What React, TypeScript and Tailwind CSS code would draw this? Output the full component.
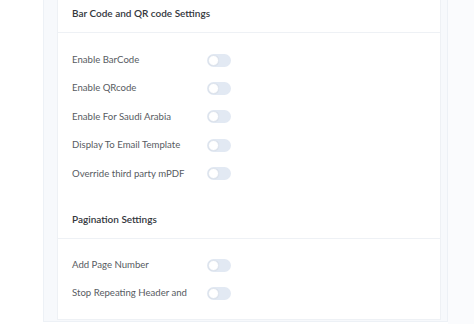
const Toggle = () => (
  <span className="relative inline-flex h-[13px] w-[24px] items-center rounded-full bg-[#e2e9f3]">
    <span className="absolute left-[1px] h-[11px] w-[11px] rounded-full border border-[#dfe5ee] bg-white shadow-[0_0_1px_rgba(0,0,0,0.08)]" />
  </span>
)

const Row = ({ label }: { label: string }) => (
  <div className="flex h-[28.4px] items-center">
    <span className="w-[135px] shrink-0 text-[9.6px] text-[#575b62]">{label}</span>
    <Toggle />
  </div>
)

const SectionHeader = ({ title }: { title: string }) => (
  <div className="flex h-[33px] items-center border-b border-[#eef1f5] px-[14px] pb-[5px]">
    <h3 className="text-[10px] font-semibold text-[#33373d]">{title}</h3>
  </div>
)

const barcodeRows = [
  'Enable BarCode',
  'Enable QRcode',
  'Enable For Saudi Arabia',
  'Display To Email Template',
  'Override third party mPDF',
]

const paginationRows = ['Add Page Number', 'Stop Repeating Header and']

export default function App() {
  return (
    <div className="flex h-[324px] w-[474px] overflow-hidden bg-white font-['Lato','Open_Sans',sans-serif]">
      <div className="w-[43px] shrink-0" />
      <div className="flex h-[322px] w-[405px] shrink-0 border-x border-b border-[#edf1f6] bg-[#f7f9fc] pl-[13px] pr-[6px]">
        <div className="h-[320px] w-full border-x border-b border-[#eef1f5] bg-white">
          <SectionHeader title="Bar Code and QR code Settings" />
          <div className="px-[14px] pb-[18px] pt-[13px]">
            {barcodeRows.map((r) => (
              <Row key={r} label={r} />
            ))}
          </div>
          <SectionHeader title="Pagination Settings" />
          <div className="px-[14px] pt-[12px]">
            {paginationRows.map((r) => (
              <Row key={r} label={r} />
            ))}
          </div>
        </div>
      </div>
      <div className="flex-1 bg-[#fafbfd]" />
    </div>
  )
}
